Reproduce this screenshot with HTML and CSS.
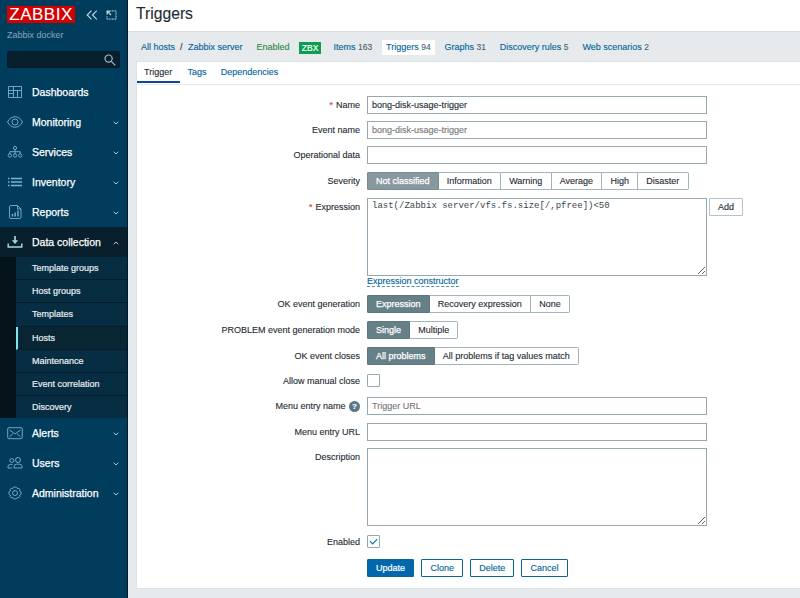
FILE: index.html
```html
<!DOCTYPE html>
<html lang="en">

<head>
    <meta charset="UTF-8">
    <meta name="viewport" content="width=device-width, initial-scale=1.0">
    <title>Triggers</title>
    <link rel="stylesheet" href="styles.css">
</head>

<body>
    <aside class="sidebar">
        <div class="sidebar-header">
            <div class="logo">ZABBIX</div>
            <svg class="header-icon collapse" viewBox="0 0 12 10"><path d="M5.5 .7 1.2 5l4.3 4.3M10.8 .7 6.5 5l4.3 4.3"/></svg>
            <svg class="header-icon kiosk" viewBox="0 0 11 10"><path d="M5.5 .9H10v8.200H1V6" stroke-dasharray="2.200 .8"/><path d="M1.200 4.500V1.200h3.300M1.500 1.500l3.500 3.500" stroke-width="1.400"/></svg>
        </div>
        <div class="server-name">Zabbix docker</div>
        <div class="search">
            <svg viewBox="0 0 12 12"><circle cx="4.600" cy="4.600" r="3.600"/><path d="m7.300 7.300 4 4"/></svg>
        </div>
        <nav class="menu">
            <a class="menu-item">
                <svg class="icon" viewBox="0 0 16 16"><path d="M1.500 2.500h13v11h-13zM6.500 2.500v11M1.500 9.500h5M1.500 6.500h13M10.500 6.500v7"/></svg>
                <span>Dashboards</span>
            </a>
            <a class="menu-item">
                <svg class="icon" viewBox="0 0 16 16"><path d="M.5 8C4 1 12 1 15.500 8 12 15 4 15 .5 8z"/><circle cx="8" cy="8" r="3"/></svg>
                <span>Monitoring</span>
                <svg class="arrow" viewBox="0 0 6 4"><path d="m.7.700 2.300 2.300L5.300.700"/></svg>
            </a>
            <a class="menu-item">
                <svg class="icon" viewBox="0 0 16 16"><circle cx="8" cy="4" r="1.600"/><circle cx="2.800" cy="11.500" r="1.700"/><circle cx="8" cy="11.500" r="1.700"/><circle cx="13.200" cy="11.500" r="1.700"/><path d="M8 5.600v4.300M2.800 9.900V7.700h10.400v2.200"/></svg>
                <span>Services</span>
                <svg class="arrow" viewBox="0 0 6 4"><path d="m.7.700 2.300 2.300L5.300.700"/></svg>
            </a>
            <a class="menu-item">
                <svg class="icon" viewBox="0 0 16 16"><path d="M1 4.500h1.500M4 4.500h11M1 8h1.500M4 8h11M1 11.500h1.500M4 11.500h11" stroke-width="1.300"/></svg>
                <span>Inventory</span>
                <svg class="arrow" viewBox="0 0 6 4"><path d="m.7.700 2.300 2.300L5.300.700"/></svg>
            </a>
            <a class="menu-item">
                <svg class="icon" viewBox="0 0 16 16"><path d="M4 1.500h6.500L14 5v8q0 1.500-1.500 1.500H4q-1.500 0-1.500-1.500V3Q2.500 1.500 4 1.500zM10.500 1.500V5H14"/><path d="M5.500 12.500V10M8.200 12.500V8.500M11 12.500V6.500" stroke-width="1.400"/></svg>
                <span>Reports</span>
                <svg class="arrow" viewBox="0 0 6 4"><path d="m.7.700 2.300 2.300L5.300.700"/></svg>
            </a>
            <a class="menu-item open">
                <svg class="icon" viewBox="0 0 16 16"><path d="M1.200 9.500V13h13.600V9.500" stroke-width="1.500"/><path d="M8 2v5" stroke-width="1.700"/><path class="fill" d="M4.800 6.200h6.400L8 10z"/></svg>
                <span>Data collection</span>
                <svg class="arrow" viewBox="0 0 6 4"><path d="M.7 3.300 3 1l2.300 2.300"/></svg>
            </a>
            <div class="submenu">
                <a>Template groups</a>
                <a>Host groups</a>
                <a>Templates</a>
                <a class="current">Hosts</a>
                <a>Maintenance</a>
                <a>Event correlation</a>
                <a>Discovery</a>
            </div>
            <a class="menu-item">
                <svg class="icon" viewBox="0 0 16 16"><rect x=".7" y="2.700" width="14.600" height="11" rx="1.200"/><path d="m2.500 5 5.500 4 5.500-4M2.500 11.800l3.500-3M13.500 11.800l-3.500-3"/></svg>
                <span>Alerts</span>
                <svg class="arrow" viewBox="0 0 6 4"><path d="m.7.700 2.300 2.300L5.300.700"/></svg>
            </a>
            <a class="menu-item">
                <svg class="icon" viewBox="0 0 16 16"><circle cx="4.800" cy="5.500" r="2"/><circle cx="11" cy="5" r="2.500"/><path d="M1 13v-1.500Q1 9.500 3.500 9.500h2M1 13h4M7 13v-1.200Q7 9.200 9.500 9.200h3Q15 9.200 15 11.800V13z"/></svg>
                <span>Users</span>
                <svg class="arrow" viewBox="0 0 6 4"><path d="m.7.700 2.300 2.300L5.300.700"/></svg>
            </a>
            <a class="menu-item">
                <svg class="icon" viewBox="0 0 16 16"><circle cx="8" cy="8" r="2.500"/><path d="m8 2 1.600.3.700 1.300 1.500-.4 1.100 1.100-.4 1.500 1.300.700.3 1.500-.3 1.500-1.300.700.4 1.500-1.100 1.100-1.500-.4-.7 1.300L8 14l-1.600-.3-.7-1.300-1.500.4-1.100-1.100.4-1.500-1.300-.7L1.900 8l.3-1.500 1.300-.7-.4-1.500 1.100-1.100 1.500.4.700-1.300z"/></svg>
                <span>Administration</span>
                <svg class="arrow" viewBox="0 0 6 4"><path d="m.7.700 2.300 2.300L5.300.700"/></svg>
            </a>
        </nav>
    </aside>

    <main class="content">
        <header class="page-header">
            <h1>Triggers</h1>
        </header>

        <div class="breadcrumbs">
            <a>All hosts</a>
            <span class="slash">/</span>
            <a class="host">Zabbix server</a>
            <span class="status">Enabled</span>
            <span class="zbx">ZBX</span>
            <a class="filter">Items <em>163</em></a>
            <a class="filter selected">Triggers <em>94</em></a>
            <a class="filter">Graphs <em>31</em></a>
            <a class="filter">Discovery rules <em>5</em></a>
            <a class="filter">Web scenarios <em>2</em></a>
        </div>

        <form class="card">
            <div class="tabs">
                <a class="tab active">Trigger</a>
                <a class="tab">Tags</a>
                <a class="tab">Dependencies</a>
            </div>

            <div class="form-grid">
                <label class="required" for="name">Name</label>
                <div><input type="text" id="name" value="bong-disk-usage-trigger"></div>

                <label for="eventName">Event name</label>
                <div><input type="text" id="eventName" placeholder="bong-disk-usage-trigger"></div>

                <label for="opdata">Operational data</label>
                <div><input type="text" id="opdata"></div>

                <label>Severity</label>
                <div class="segments severity">
                    <span class="on">Not classified</span><span>Information</span><span>Warning</span><span>Average</span><span>High</span><span>Disaster</span>
                </div>

                <label class="required" for="expression">Expression</label>
                <div class="expression">
                    <div class="expression-row">
                        <textarea id="expression" class="mono" spellcheck="false">last(/Zabbix server/vfs.fs.size[/,pfree])&lt;50</textarea>
                        <button type="button" class="grey">Add</button>
                    </div>
                    <a class="dotted">Expression constructor</a>
                </div>

                <label>OK event generation</label>
                <div class="segments">
                    <span class="on">Expression</span><span>Recovery expression</span><span>None</span>
                </div>

                <label>PROBLEM event generation mode</label>
                <div class="segments">
                    <span class="on">Single</span><span>Multiple</span>
                </div>

                <label>OK event closes</label>
                <div class="segments">
                    <span class="on">All problems</span><span>All problems if tag values match</span>
                </div>

                <label class="check-label">Allow manual close</label>
                <div><span class="checkbox"></span></div>

                <label for="menuName">Menu entry name <span class="help">?</span></label>
                <div><input type="text" id="menuName" placeholder="Trigger URL"></div>

                <label for="menuUrl">Menu entry URL</label>
                <div><input type="text" id="menuUrl"></div>

                <label for="description">Description</label>
                <div><textarea id="description"></textarea></div>

                <label class="check-label">Enabled</label>
                <div><span class="checkbox"><svg viewBox="0 0 11 11"><path d="m2 5.200 2.600 2.600 4.600-4.600"/></svg></span></div>

                <div class="buttons">
                    <button type="button" class="primary">Update</button>
                    <button type="button">Clone</button>
                    <button type="button">Delete</button>
                    <button type="button">Cancel</button>
                </div>
            </div>
        </form>
    </main>
</body>

</html>
```
FILE: styles.css
```css
* {
    padding: 0;
    margin: 0;
    box-sizing: border-box;
}

body {
    font-family: "Liberation Sans", Arial, sans-serif;
    font-size: 9px;
    color: #1f2c33;
    display: flex;
    height: 598px;
    overflow: hidden;
    background-color: #e6eaed;
    -webkit-text-stroke: 0.12px;
}

svg {
    fill: none;
    stroke: currentColor;
    flex-shrink: 0;
}

/* Sidebar */
.sidebar {
    width: 128px;
    flex-shrink: 0;
    background-color: #003d5d;
    border-right: 1px solid #00172a;
}

.sidebar-header {
    display: flex;
    align-items: center;
    padding: 6px 0 0 7px;
    color: #b4d0df;
}

.logo {
    width: 68px;
    height: 17px;
    background-color: #d40000;
    color: #fff;
    font-size: 17px;
    line-height: 18px;
    text-align: center;
    letter-spacing: 0.5px;
}

.header-icon {
    height: 10px;
}

.collapse {
    width: 12px;
    margin-left: 11px;
    stroke-width: 1.2;
}

.kiosk {
    width: 11px;
    margin-left: 8px;
}

.server-name {
    padding-left: 7px;
    margin-top: 6px;
    height: 12px;
    line-height: 12px;
    color: #7f9fb1;
}

.search {
    display: flex;
    justify-content: flex-end;
    align-items: center;
    width: 113px;
    height: 17px;
    margin: 10px 0 9px 7px;
    padding-right: 3px;
    background-color: #08202e;
    border: 1px solid #001c2e;
    border-radius: 2px;
    color: #9fb9c7;
}

.search svg {
    width: 12px;
    height: 12px;
    stroke-width: 1.2;
}

.menu-item {
    display: flex;
    align-items: center;
    height: 30px;
    padding: 0 8px 0 7px;
    color: #fff;
    font-size: 10.5px;
    -webkit-text-stroke: 0.25px #fff;
}

.menu-item span {
    flex: 1;
    margin-left: 9px;
    white-space: nowrap;
}

.icon {
    width: 16px;
    height: 16px;
    color: #7db2cf;
    stroke-width: 0.9;
}

.icon .fill {
    fill: currentColor;
    stroke: none;
}

.arrow {
    width: 6px;
    height: 4px;
    margin-top: 2px;
    color: #a9c8d8;
}

.menu-item.open {
    background-color: #08202d;
}

.open .icon {
    color: #a5d3e6;
}

.submenu {
    height: 161px;
    overflow: hidden;
    padding-left: 16px;
    background-color: #05131b;
}

.submenu a {
    display: block;
    height: 23.2px;
    padding-left: 16px;
    line-height: 22.8px;
    color: #e6eef2;
    background-color: #062d41;
    border-bottom: 1px solid #051d2b;
    -webkit-text-stroke: 0.2px #e6eef2;
}

.submenu .current {
    padding-left: 14px;
    background-color: #072533;
    border-left: 2px solid #7ce4ec;
}

/* Page header */
.content {
    flex: 1;
    min-width: 0;
}

.page-header {
    height: 32px;
    padding-left: 8px;
    background-color: #fff;
    border-bottom: 1px solid #d6dee3;
}

.page-header h1 {
    font-size: 15.7px;
    font-weight: normal;
    line-height: 28px;
}

.breadcrumbs {
    display: flex;
    align-items: center;
    height: 29px;
    padding: 1px 0 0 13px;
    color: #006499;
    white-space: nowrap;
}

.slash {
    margin: 0 5.5px 0 5px;
    color: #1f2c33;
}

.status {
    margin-left: 14px;
    color: #2c8a3e;
}

.zbx {
    width: 22px;
    height: 12px;
    margin: 1px 8px 0 9.5px;
    background-color: #0a9f4e;
    color: #fff;
    font-size: 8.5px;
    line-height: 12px;
    text-align: center;
    -webkit-text-stroke: 0.2px #fff;
}

.filter {
    height: 15px;
    line-height: 15px;
    padding: 0 4.5px;
    margin-right: 4.8px;
}

.filter em {
    font-style: normal;
    font-size: 8.5px;
    color: #4b6472;
}

.filter.selected {
    background-color: #fff;
}

/* Form card */
.card {
    height: 528px;
    margin-left: 8px;
    background-color: #fff;
    border: 1px solid #dce2e6;
    border-right: none;
}

.tabs {
    display: flex;
    height: 23px;
    border-bottom: 1px solid #e2e6e9;
}

.tab {
    height: 21px;
    line-height: 20px;
    padding: 0 7.2px;
    color: #006499;
}

.tab.active {
    color: #1f2c33;
    padding: 0 8px 0 7px;
    border-bottom: 2px solid #0b489a;
}

.form-grid {
    display: grid;
    grid-template-columns: 223px 1fr;
    grid-template-rows: 25px 25px 26px 26px 97px 26px 26px 27px 23px 26px 25px 87px 24px 19px;
    column-gap: 7px;
    padding-top: 11px;
}

label {
    height: 18px;
    line-height: 18px;
    text-align: right;
    white-space: nowrap;
}

.check-label {
    height: 13px;
    line-height: 14px;
}

.required::before {
    content: "*";
    margin-right: 3px;
    color: #e33734;
}

input,
textarea {
    display: block;
    width: 340px;
    padding: 0 4px;
    font: inherit;
    color: #1f2c33;
    background-color: #fff;
    border: 1px solid #98a8b0;
    outline: none;
}

input {
    height: 18px;
}

input::placeholder {
    color: #777;
}

textarea {
    height: 78px;
    padding-top: 2px;
}

.mono {
    font-family: "Liberation Mono", "Courier New", monospace;
    color: #3a454b;
    -webkit-text-stroke: 0;
}

.expression-row {
    display: flex;
    gap: 2px;
}

.dotted {
    display: inline-block;
    height: 11px;
    line-height: 10px;
    color: #006499;
    border-bottom: 1px dashed #4a8fb5;
}

.segments {
    display: flex;
    height: 18px;
}

.segments span {
    height: 18px;
    padding: 0 8.2px;
    line-height: 17px;
    white-space: nowrap;
    border: 1px solid #a3b3bb;
    border-left-width: 0;
}

.segments .on {
    padding: 0 8px;
    color: #fff;
    background-color: #668087;
    border: 1px solid #5d7680;
    border-radius: 1px 0 0 1px;
    -webkit-text-stroke: 0.25px #fff;
}

.segments span:last-child {
    border-radius: 0 2px 2px 0;
}

.severity .on {
    background-color: #87999f;
    border-color: #768d96;
}

.help {
    display: inline-block;
    width: 11px;
    height: 11px;
    margin-left: 1px;
    border-radius: 50%;
    background-color: #5a7785;
    color: #fff;
    font-size: 8px;
    font-weight: bold;
    line-height: 11px;
    text-align: center;
}

.checkbox {
    display: block;
    width: 13px;
    height: 13px;
    border: 1px solid #98a8b0;
    border-radius: 1px;
    color: #0275b8;
}

.checkbox svg {
    display: block;
    width: 11px;
    height: 11px;
    stroke-width: 1.2;
}

.buttons {
    grid-column: 2;
    display: flex;
    gap: 7.1px;
}

button {
    height: 18px;
    padding: 0 8.1px;
    font: inherit;
    line-height: 16px;
    color: #006499;
    background-color: #fff;
    border: 1px solid #0a6499;
    border-radius: 1px;
}

button.primary {
    color: #fff;
    background-color: #0268ae;
    -webkit-text-stroke: 0.2px #fff;
}

button.grey {
    color: #1f2c33;
    padding: 0 8px;
    border-color: #b3c2c9;
}
```
